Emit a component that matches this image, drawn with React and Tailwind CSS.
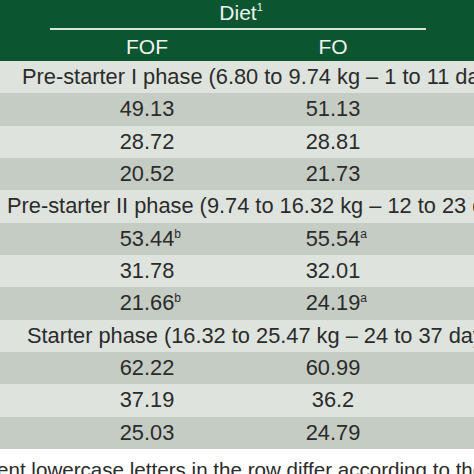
const sections = [
  {
    title: "Pre-starter I phase (6.80 to 9.74 kg – 1 to 11 days)",
    pad: "pl-[22px]",
    rows: [
      ["49.13", "", "51.13", ""],
      ["28.72", "", "28.81", ""],
      ["20.52", "", "21.73", ""],
    ],
  },
  {
    title: "Pre-starter II phase (9.74 to 16.32 kg – 12 to 23 days)",
    pad: "pl-[7px]",
    rows: [
      ["53.44", "b", "55.54", "a"],
      ["31.78", "", "32.01", ""],
      ["21.66", "b", "24.19", "a"],
    ],
  },
  {
    title: "Starter phase (16.32 to 25.47 kg – 24 to 37 days)",
    pad: "pl-[27px]",
    rows: [
      ["62.22", "", "60.99", ""],
      ["37.19", "", "36.2", ""],
      ["25.03", "", "24.79", ""],
    ],
  },
];

function Value({ value, sup }) {
  return (
    <span className="relative">
      {value}
      {sup && (
        <span className="absolute left-full top-[2px] text-[12px] leading-none">
          {sup}
        </span>
      )}
    </span>
  );
}

export default function App() {
  return (
    <div
      className="w-[474px] h-[474px] overflow-hidden bg-white text-[21.8px] text-[#2b2b2b]"
      style={{ fontFamily: '"Liberation Sans", Arial, sans-serif' }}
    >
      {/* Header */}
      <div className="h-[61px] bg-[#0b5531] text-[#eef4ef] flex flex-col">
        <div className="flex">
          <div className="w-[50px]" />
          <div className="w-[376px] flex flex-col items-center">
            <div className="h-[28px] leading-[26px] text-[21px] relative">
              Diet
              <span className="absolute left-full top-[2px] text-[11px] leading-none">1</span>
            </div>
            <div className="h-[1.5px] w-full bg-[#d6e6da]" />
          </div>
        </div>
        <div className="flex h-[32px] items-center text-[21px] pt-[2px]">
          <div className="w-[54px]" />
          <div className="w-[186px] text-center">FOF</div>
          <div className="w-[186px] text-center">FO</div>
        </div>
      </div>

      {/* Body */}
      {sections.map((section) => (
        <div key={section.title}>
          <div
            className={`h-[32.35px] bg-[#dee3de] flex items-center whitespace-nowrap ${section.pad}`}
          >
            {section.title}
          </div>
          {section.rows.map((row, i) => (
            <div
              key={i}
              className={`h-[32.35px] flex items-center ${
                i % 2 === 0 ? "bg-[#c5ccc4]" : "bg-[#dee3de]"
              }`}
            >
              <div className="w-[54px]" />
              <div className="w-[186px] text-center">
                <Value value={row[0]} sup={row[1]} />
              </div>
              <div className="w-[186px] text-center">
                <Value value={row[2]} sup={row[3]} />
              </div>
            </div>
          ))}
        </div>
      ))}

      {/* Footnote */}
      <div className="mt-[9px] -ml-[3px] whitespace-nowrap leading-[24px] text-[20.6px]">
        ent lowercase letters in the row differ according to the F test
      </div>
    </div>
  );
}
